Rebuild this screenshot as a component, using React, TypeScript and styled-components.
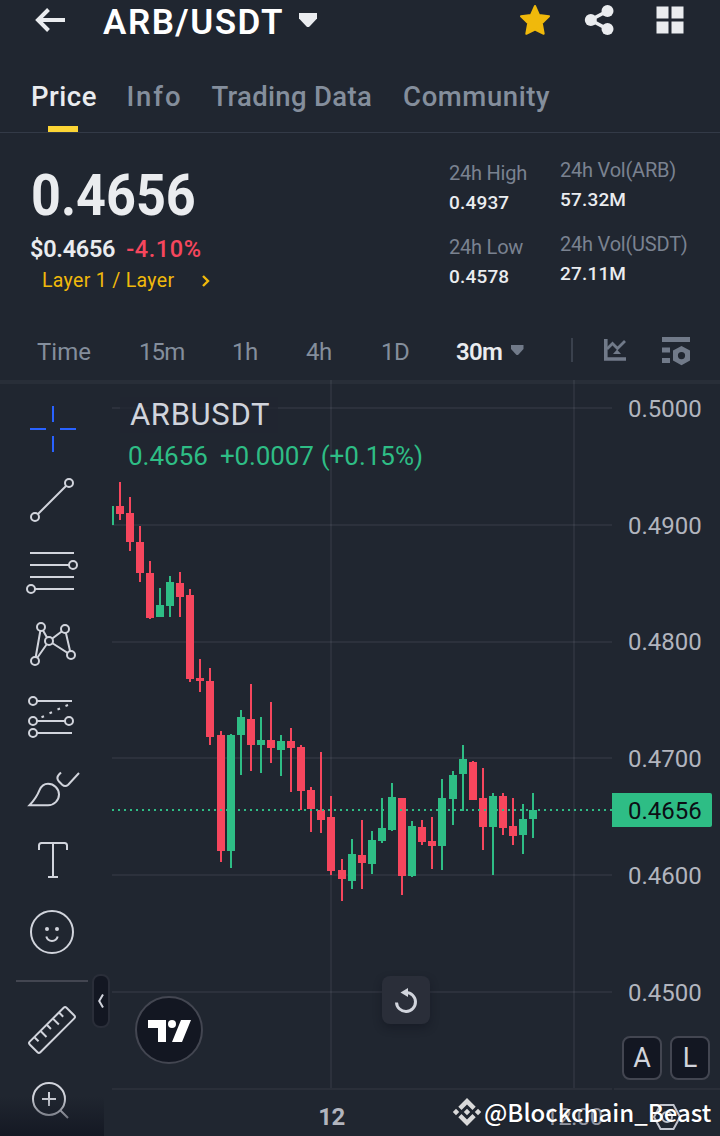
import React from 'react';
import styled, { createGlobalStyle } from 'styled-components';

const Global = createGlobalStyle`
  * { box-sizing: border-box; }
  body { margin: 0; background: #202630; font-family: Roboto, sans-serif; }
  svg { display: block; flex: none; }
`;

const GREEN = '#2ebd85';
const RED = '#f6465d';
const ICON = '#d1d4dc';

const Screen = styled.div`
  width: 720px;
  height: 1136px;
  position: relative;
  overflow: hidden;
  background: #202630;
  color: #eaecef;
  white-space: nowrap;
`;

/* ---------- header ---------- */
const Header = styled.header`
  display: flex;
  height: 44px;
  padding-left: 34px;
  align-items: flex-start;
`;
const Title = styled.h1`
  margin: 0 0 0 37px;
  width: 190px;
  font-size: 35px;
  line-height: 46px;
  font-weight: 600;
  letter-spacing: 1.52px;
  color: #fff;
`;
const HeaderActions = styled.div`
  display: flex;
  margin-left: 196px;
  gap: 28px;
`;

/* ---------- tabs ---------- */
const Tabs = styled.nav`
  display: flex;
  height: 89px;
  padding-left: 31px;
  border-bottom: 1px solid #333a47;
`;
const Tab = styled.div<{ $active?: boolean; $gap?: number; $spacing: number }>`
  display: flex;
  flex-direction: column;
  align-items: center;
  justify-content: space-between;
  padding-top: 35px;
  margin-left: ${(p) => p.$gap ?? 0}px;
  font-size: 27.5px;
  line-height: 36px;
  font-weight: 500;
  letter-spacing: ${(p) => p.$spacing}px;
  color: ${(p) => (p.$active ? '#eaecef' : '#848e9c')};
`;
const TabBar = styled.span`
  width: 30px;
  height: 6px;
  margin-right: 2px;
  background: #fcd535;
`;

/* ---------- price summary ---------- */
const Summary = styled.section`
  display: flex;
  height: 190px;
  padding: 28px 0 0 31px;
`;
const PriceBlock = styled.div`
  width: 418px;
  padding-top: 5px;
`;
const BigPrice = styled.div`
  font-size: 57px;
  line-height: 60px;
  font-weight: 700;
  transform: scaleX(0.915);
  transform-origin: left;
`;
const SubPrice = styled.div`
  display: flex;
  gap: 11px;
  margin: 9px 0 0 -1px;
  font-size: 23.5px;
  line-height: 28px;
  font-weight: 600;
  letter-spacing: -0.3px;
`;
const Change = styled.span`
  color: ${RED};
  font-weight: 500;
  letter-spacing: 0.6px;
`;
const Category = styled.div`
  display: flex;
  align-items: center;
  gap: 27px;
  margin: 5px 0 0 11px;
  font-size: 19.5px;
  line-height: 26px;
  letter-spacing: 0.32px;
  color: #f0b90b;
`;
const StatColumn = styled.div<{ $raised?: boolean }>`
  display: flex;
  flex-direction: column;
  gap: 20px;
  width: 111px;
  margin-top: ${(p) => (p.$raised ? -3 : 0)}px;
`;
const Stat = styled.div`
  display: flex;
  flex-direction: column;
  gap: 6px;
`;
const StatLabel = styled.span`
  font-size: 20px;
  line-height: 24px;
  letter-spacing: -0.22px;
  color: #7a8290;
`;
const StatValue = styled.span`
  font-size: 19px;
  line-height: 24px;
  font-weight: 500;
  letter-spacing: 0.18px;
`;

/* ---------- interval bar ---------- */
const Intervals = styled.div`
  display: grid;
  grid-template-columns: 102px 93px 74px 75px 75px 55px 60px 32px 59px 28px;
  align-items: center;
  height: 57px;
  padding-left: 37px;
  font-size: 24px;
  line-height: 30px;
  color: #848e9c;
`;
const Interval = styled.span<{ $active?: boolean; $spacing?: number }>`
  letter-spacing: ${(p) => p.$spacing ?? -0.5}px;
  font-weight: ${(p) => (p.$active ? 600 : 400)};
  color: ${(p) => (p.$active ? '#eaecef' : 'inherit')};
`;
const Divider = styled.span`
  width: 2px;
  height: 24px;
  margin-bottom: 3px;
  background: #3a414d;
`;

/* ---------- chart area ---------- */
const Main = styled.main`
  display: flex;
  height: 756px;
  background: linear-gradient(#282e38, #282e38) top / 100% 4px no-repeat;
`;
const Toolbar = styled.aside`
  position: relative;
  width: 112px;
  padding-top: 12px;
  overflow: hidden;
`;
const ToolSeparator = styled.div`
  width: 72px;
  height: 2px;
  margin: 12px 16px;
  background: #434651;
`;
const ToolbarFade = styled.div`
  position: absolute;
  left: 0;
  bottom: 0;
  width: 104px;
  height: 40px;
  background: linear-gradient(rgba(19, 23, 34, 0), rgba(19, 23, 34, 0.9));
`;
const Collapse = styled.button`
  position: absolute;
  left: 92px;
  top: 594px;
  width: 18px;
  height: 54px;
  padding: 0;
  border: 2px solid #2a2e39;
  border-radius: 8px;
  background: #131722;
`;
const Plot = styled.div`
  position: relative;
  width: 500px;
`;
const Legend = styled.div`
  position: absolute;
  left: 8px;
  top: 17px;
`;
const Symbol = styled.div`
  width: 158px;
  padding-left: 10px;
  background: rgba(32, 38, 48, 0.75);
  font-size: 31px;
  line-height: 36px;
  letter-spacing: 0.65px;
  color: #d1d4dc;
`;
const Quote = styled.div`
  display: flex;
  padding-left: 8px;
  margin-top: 6px;
  font-size: 26px;
  line-height: 34px;
  color: ${GREEN};
  span + span { margin-left: 12px; letter-spacing: -0.14px; }
  span + span + span { margin-left: 7px; letter-spacing: 0; }
`;
const Brand = styled.div`
  position: absolute;
  left: 23px;
  top: 616px;
  width: 68px;
  height: 68px;
  border: 2px solid #434651;
  border-radius: 50%;
  background: #131722;
`;
const ResetButton = styled.button`
  position: absolute;
  left: 270px;
  top: 596px;
  width: 48px;
  height: 48px;
  padding: 0;
  border: 0;
  border-radius: 8px;
  background: #2a2e39;
  box-shadow: 0 4px 8px rgba(15, 18, 28, 0.45);
`;
const TimeAxis = styled.div`
  display: flex;
  height: 48px;
  border-top: 2px solid #2a2f39;
  font-size: 24px;
  line-height: 54px;
`;
const Tick = styled.span<{ $bold?: boolean; $gap: number }>`
  width: 60px;
  margin-left: ${(p) => p.$gap}px;
  text-align: center;
  font-weight: ${(p) => (p.$bold ? 700 : 400)};
  letter-spacing: -0.4px;
  color: ${(p) => (p.$bold ? '#b2b5be' : '#9598a3')};
`;
const PriceAxis = styled.div`
  position: relative;
  display: flex;
  flex-direction: column;
  width: 108px;
`;
const PriceLabels = styled.div`
  display: flex;
  flex-direction: column;
  gap: 92.8px;
  height: 708px;
  padding: 16.8px 0 0 16px;
  font-size: 24px;
  line-height: 24px;
  color: #b2b5be;
`;
const PriceTag = styled.div`
  position: absolute;
  left: 0;
  top: 413px;
  width: 100px;
  height: 34px;
  padding-left: 16px;
  border-radius: 0 2px 2px 0;
  background: ${GREEN};
  color: #0c0e15;
  font-size: 24px;
  line-height: 37px;
`;
const ScaleButtons = styled.div`
  position: absolute;
  left: 10px;
  top: 656px;
  display: flex;
  gap: 8px;
`;
const ScaleButton = styled.button`
  width: 40px;
  height: 44px;
  padding: 0;
  border: 2px solid #434651;
  border-radius: 8px;
  background: #131722;
  color: #d1d4dc;
  font: 400 27px/38px Roboto, sans-serif;
`;
const AxisCorner = styled.div`
  height: 48px;
  margin-left: 2px;
  border-top: 2px solid #2a2f39;
`;
const Watermark = styled.div`
  position: absolute;
  left: 452px;
  top: 1096px;
  display: flex;
  align-items: center;
  gap: 2px;
  height: 31px;
  color: #fff;
  font: 500 24px/30px 'Noto Sans CJK SC', sans-serif;
  letter-spacing: 0.03px;
  text-shadow: 0 0 2px rgba(0, 0, 0, 0.35);
`;

/* centre x, wick top, wick bottom, body top, body bottom, rising */
type Candle = [number, number, number, number, number, 0 | 1];
const candles: Candle[] = [
  [120, 482, 520, 506, 514, 0],
  [130, 497, 551, 513, 542, 0],
  [140, 526, 582, 542, 573, 0],
  [150, 561, 619, 573, 618, 0],
  [160, 588, 617, 605, 617, 1],
  [170, 576, 617, 582, 606, 1],
  [180, 572, 617, 583, 597, 0],
  [190, 589, 682, 595, 679, 0],
  [200, 659, 692, 678, 681, 0],
  [210, 668, 745, 681, 737, 0],
  [221, 731, 862, 735, 851, 0],
  [231, 734, 868, 735, 851, 1],
  [241, 710, 775, 717, 735, 1],
  [251, 684, 771, 719, 745, 0],
  [261, 717, 773, 740, 745, 1],
  [271, 702, 763, 740, 748, 0],
  [281, 735, 776, 741, 750, 1],
  [291, 728, 792, 741, 748, 0],
  [301, 745, 810, 747, 791, 0],
  [311, 787, 832, 790, 809, 0],
  [321, 752, 833, 810, 820, 0],
  [331, 796, 875, 817, 871, 0],
  [342, 859, 901, 870, 879, 0],
  [352, 839, 889, 854, 881, 1],
  [362, 820, 889, 855, 863, 0],
  [372, 831, 874, 840, 864, 1],
  [382, 798, 843, 828, 841, 1],
  [392, 783, 831, 797, 830, 1],
  [402, 798, 895, 798, 876, 0],
  [412, 821, 877, 826, 876, 1],
  [422, 820, 845, 827, 842, 0],
  [432, 817, 869, 841, 846, 0],
  [442, 779, 870, 798, 846, 1],
  [453, 771, 825, 775, 799, 1],
  [463, 745, 811, 759, 774, 1],
  [473, 761, 800, 762, 800, 0],
  [483, 768, 850, 798, 827, 0],
  [493, 793, 875, 796, 827, 1],
  [503, 793, 835, 796, 828, 0],
  [513, 798, 845, 826, 836, 0],
  [523, 804, 854, 819, 835, 1],
  [533, 793, 838, 810, 819, 1],
];
const gridRows = [407, 524, 641, 757, 874, 991];
const gridCols = [330, 573];
const prices = ['0.5000', '0.4900', '0.4800', '0.4700', '0.4600', '0.4500'];

function CandleChart() {
  return (
    <svg width="500" height="708" viewBox="112 380 500 708" shapeRendering="crispEdges">
      {gridRows.map((y) => (
        <rect key={y} x="112" y={y} width="500" height="2" fill="#f0f3fa" fillOpacity="0.06" />
      ))}
      {gridCols.map((x) => (
        <rect key={x} x={x} y="380" width="2" height="708" fill="#f0f3fa" fillOpacity="0.06" />
      ))}
      <rect x="112" y="506" width="2" height="19" fill={GREEN} />
      {candles.map(([x, wt, wb, bt, bb, up]) => (
        <g key={x} fill={up ? GREEN : RED}>
          <rect x={x - 1} y={wt} width="2" height={wb - wt} />
          <rect x={x - 4} y={bt} width="8" height={bb - bt} />
        </g>
      ))}
      <path d="M112 810H612" stroke={GREEN} strokeWidth="2" strokeDasharray="2 4" />
    </svg>
  );
}

function Tool({ children, color = ICON }: { children: React.ReactNode; color?: string }) {
  return (
    <svg width="104" height="72" viewBox="0 0 104 72" fill="none" stroke={color} strokeWidth="2">
      {children}
    </svg>
  );
}

const Ring = ({ x, y }: { x: number; y: number }) => <circle cx={x} cy={y} r="4" fill="#202630" />;

export default function App() {
  return (
    <Screen>
      <Global />
      <Header>
        <svg width="32" height="44" viewBox="0 0 32 44" fill="none" stroke="#eaecef" strokeWidth="4">
          <path d="M31 20H4M14.500 9.500L4 20l10.500 10.500" />
        </svg>
        <Title>ARB/USDT</Title>
        <svg width="30" height="44" viewBox="293 0 30 44" fill="#eaecef">
          <path d="M299 13h18v5.500l-7.500 8q-1.500 1-3 0l-7.500-8z" />
        </svg>
        <HeaderActions>
          <svg width="32" height="44" viewBox="519 0 32 44" fill="#f0b90b" stroke="#f0b90b" strokeWidth="2" strokeLinejoin="round">
            <path d="M535 6l4 9 10 1.300-7.200 7 1.900 10.500-8.700-4.300-8.700 4.300 1.900-10.500-7.200-7 10-1.300z" />
          </svg>
          <svg width="40" height="44" viewBox="579 0 40 44" fill="#eaecef">
            <path d="M607.500 11L590.500 20l17 9" fill="none" stroke="#eaecef" strokeWidth="3.600" />
            <circle cx="607.500" cy="11" r="6" />
            <circle cx="590.800" cy="20" r="6" />
            <circle cx="607.500" cy="29" r="6" />
          </svg>
          <svg width="40" height="44" viewBox="647 0 40 44" fill="#eaecef">
            <path d="M656.500 6.500h12v12h-12zM671.500 6.500h12v12h-12zM656.500 21.500h12v12h-12zM671.500 21.500h12v12h-12z" />
          </svg>
        </HeaderActions>
      </Header>

      <Tabs>
        <Tab $active $spacing={0.5}>
          Price
          <TabBar />
        </Tab>
        <Tab $gap={29.5} $spacing={1.9}>Info</Tab>
        <Tab $gap={29} $spacing={0.32}>Trading Data</Tab>
        <Tab $gap={31} $spacing={0.58}>Community</Tab>
      </Tabs>

      <Summary>
        <PriceBlock>
          <BigPrice>0.4656</BigPrice>
          <SubPrice>
            $0.4656 <Change>-4.10%</Change>
          </SubPrice>
          <Category>
            Layer 1 / Layer
            <svg width="10" height="14" viewBox="0 0 10 14" fill="none" stroke="#f0b90b" strokeWidth="2.400">
              <path d="M2 2l5 5-5 5" />
            </svg>
          </Category>
        </PriceBlock>
        <StatColumn>
          <Stat>
            <StatLabel>24h High</StatLabel>
            <StatValue>0.4937</StatValue>
          </Stat>
          <Stat>
            <StatLabel>24h Low</StatLabel>
            <StatValue>0.4578</StatValue>
          </Stat>
        </StatColumn>
        <StatColumn $raised>
          <Stat>
            <StatLabel>24h Vol(ARB)</StatLabel>
            <StatValue>57.32M</StatValue>
          </Stat>
          <Stat>
            <StatLabel>24h Vol(USDT)</StatLabel>
            <StatValue>27.11M</StatValue>
          </Stat>
        </StatColumn>
      </Summary>

      <Intervals>
        <Interval $spacing={0}>Time</Interval>
        <Interval $spacing={-0.9}>15m</Interval>
        <Interval>1h</Interval>
        <Interval>4h</Interval>
        <Interval>1D</Interval>
        <Interval $active $spacing={-0.7}>30m</Interval>
        <svg width="14" height="16" viewBox="512 344 14 16" fill="#717a89">
          <path d="M512 345h12.500v4l-5 5.500q-1.200 1-2.500 0l-5-5.500z" />
        </svg>
        <Divider />
        <svg width="24" height="28" viewBox="603 338 24 28" fill="none" stroke="#717a89" strokeWidth="3.600">
          <path d="M605.800 339v20H626" />
          <path d="M607 349l5.500-5.500 5 5L625 341" strokeWidth="2.800" />
          <path d="M613 354l4-4.500 4 4.500z" fill="#717a89" stroke="none" />
        </svg>
        <svg width="28" height="32" viewBox="662 336 28 32" fill="#717a89">
          <path d="M662 337h28v5h-28zM662 347.500h8v5h-8zM662 358h8v5h-8z" />
          <path fillRule="evenodd" d="M681.500 346l8.500 4.600v9.800l-8.500 4.800-8.500-4.800v-9.800zM681.500 352a3.600 3.600 0 1 0 0 7.200 3.600 3.600 0 0 0 0-7.200z" />
        </svg>
      </Intervals>

      <Main>
        <Toolbar>
          <Tool color="#2962ff">
            <path d="M30 37h16M60 37h16M53 14v16M53 44v16" />
          </Tool>
          <Tool>
            <path d="M35 53L69 19" />
            <Ring x={35} y={53} />
            <Ring x={69} y={19} />
          </Tool>
          <Tool>
            <path d="M30 17h44M30 29h44M30 41h44M30 53h44" />
            <Ring x={73} y={29} />
            <Ring x={31} y={53} />
          </Tool>
          <Tool>
            <path d="M35 53L41 19l8 14 16-12 6 26-22-14z" />
            <Ring x={41} y={19} />
            <Ring x={65} y={21} />
            <Ring x={49} y={33} />
            <Ring x={71} y={47} />
            <Ring x={35} y={53} />
          </Tool>
          <Tool>
            <path d="M33 21h39M33 41h36M33 53h39" />
            <path d="M41.500 37.200l2.500-1M49.500 33.200l2.500-1M57.500 29.500l2.500-1M65.500 26l2.500-1" />
            <Ring x={33} y={21} />
            <Ring x={33} y={41} />
            <Ring x={69} y={41} />
            <Ring x={33} y={53} />
          </Tool>
          <Tool>
            <path d="M29.500 53.300C36 46.500 38 42 39.500 38.200 41.300 34 44 31.800 48 31.800c6 0 11 4.800 11 10.700s-5 10.800-11 10.800z" />
            <path d="M61 20.500l-2 2q-3.200 3.500 0 7l3.200 3.200q3 2.700 6 0L79 21" />
          </Tool>
          <Tool>
            <path d="M39 26v-4.500q0-2.500 2.500-2.500h23q2.500 0 2.500 2.500V26M53 19v34M48 53h10" />
          </Tool>
          <Tool>
            <circle cx="52" cy="36" r="21" />
            <circle cx="47" cy="33" r="2" fill={ICON} stroke="none" />
            <circle cx="57" cy="33" r="2" fill={ICON} stroke="none" />
            <path d="M46.300 40.500a5.900 5.900 0 0 0 11.400 0" />
          </Tool>
          <ToolSeparator />
          <Tool>
            <g transform="rotate(-45 52 36)">
              <rect x="26" y="28.500" width="52" height="15" rx="2" />
              <path d="M34.500 29v5.500M43.200 29v8M52 29v5.500M60.700 29v8M69.300 29v5.500" />
            </g>
          </Tool>
          <Tool>
            <circle cx="49" cy="33" r="16" />
            <path d="M42 33h14M49 26v14M60.500 44.500L68 52" />
          </Tool>
          <ToolbarFade />
          <Collapse>
            <svg width="14" height="50" viewBox="94 976 14 50" fill="none" stroke={ICON} strokeWidth="2">
              <path d="M103 994.500l-3.800 6.500 3.800 6.500" />
            </svg>
          </Collapse>
        </Toolbar>

        <Plot>
          <CandleChart />
          <Legend>
            <Symbol>ARBUSDT</Symbol>
            <Quote>
              <span>0.4656</span>
              <span>+0.0007</span>
              <span>(+0.15%)</span>
            </Quote>
          </Legend>
          <Brand>
            <svg width="64" height="64" viewBox="137 998 64 64" fill="#fff">
              <path d="M148 1020h18v22h-8v-14h-10zM181 1020h10l-9 22h-10z" />
              <circle cx="172" cy="1024" r="4" />
            </svg>
          </Brand>
          <ResetButton>
            <svg width="48" height="48" viewBox="382 976 48 48">
              <path d="M396.500 1002.500a9.500 9.500 0 1 0 9.500-10" fill="none" stroke={ICON} strokeWidth="3" />
              <path d="M408 988v9l-7.500-4.500z" fill={ICON} />
            </svg>
          </ResetButton>
          <TimeAxis>
            <Tick $bold $gap={189.5}>12</Tick>
            <Tick $gap={182.5}>12:00</Tick>
          </TimeAxis>
        </Plot>

        <PriceAxis>
          <PriceLabels>
            {prices.map((p) => (
              <span key={p}>{p}</span>
            ))}
          </PriceLabels>
          <AxisCorner>
            <svg width="106" height="46" viewBox="614 1090 106 46" fill="none" stroke="#c3c6cf" strokeWidth="2">
              <path d="M660.500 1105h13l6.500 12-6.500 12h-13l-6.500-12z" />
              <circle cx="667" cy="1117" r="5" />
            </svg>
          </AxisCorner>
          <PriceTag>0.4656</PriceTag>
          <ScaleButtons>
            <ScaleButton>A</ScaleButton>
            <ScaleButton>L</ScaleButton>
          </ScaleButtons>
        </PriceAxis>
      </Main>

      <Watermark>
        <svg width="30" height="30" viewBox="-15 -15 30 30" fill="#d9d9d9">
          <path d="M0-14L8.700-5.300 5.500-2.100 0-7.600-5.500-2.100-8.700-5.300zM0 14L8.700 5.300 5.500 2.100 0 7.600-5.500 2.100-8.700 5.300z" />
          <path d="M0-3.200L3.200 0 0 3.200-3.200 0zM-11-3.200L-7.800 0-11 3.200-14.200 0zM11-3.200L14.200 0 11 3.200 7.800 0z" />
        </svg>
        @Blockchain_Beast
      </Watermark>
    </Screen>
  );
}
